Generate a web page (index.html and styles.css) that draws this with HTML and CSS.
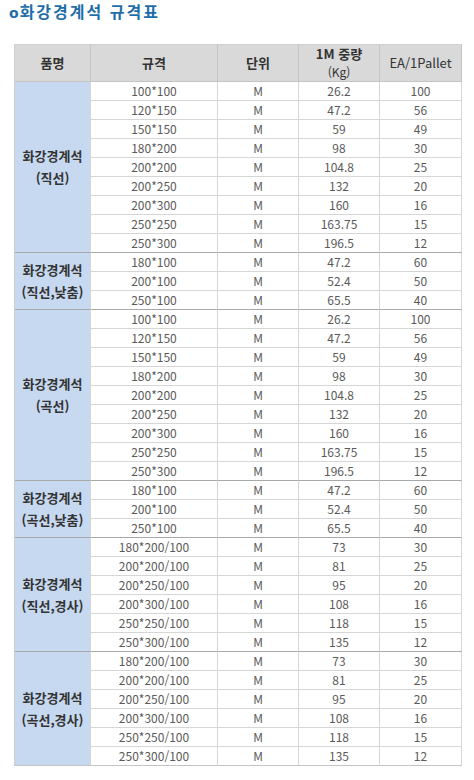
FILE: index.html
```html
<!DOCTYPE html>
<html lang="ko">
<head>
<meta charset="utf-8">
<link rel="stylesheet" href="styles.css">
</head>
<body>
<h1 class="title"><span class="bullet">o</span>화강경계석 규격표</h1>
<table class="spec">
  <colgroup>
    <col class="c1"><col class="c2"><col class="c3"><col class="c4"><col class="c5">
  </colgroup>
  <thead>
    <tr>
      <th class="b">품명</th>
      <th class="b">규격</th>
      <th class="b">단위</th>
      <th class="two"><span class="b">1M 중량</span><br><span class="kg">(Kg)</span></th>
      <th>EA/1Pallet</th>
    </tr>
  </thead>
  <tbody>
    <tr><td class="name" rowspan="9">화강경계석<br>(직선)</td><td>100*100</td><td>M</td><td>26.2</td><td>100</td></tr>
    <tr><td>120*150</td><td>M</td><td>47.2</td><td>56</td></tr>
    <tr><td>150*150</td><td>M</td><td>59</td><td>49</td></tr>
    <tr><td>180*200</td><td>M</td><td>98</td><td>30</td></tr>
    <tr><td>200*200</td><td>M</td><td>104.8</td><td>25</td></tr>
    <tr><td>200*250</td><td>M</td><td>132</td><td>20</td></tr>
    <tr><td>200*300</td><td>M</td><td>160</td><td>16</td></tr>
    <tr><td>250*250</td><td>M</td><td>163.75</td><td>15</td></tr>
    <tr class="end"><td>250*300</td><td>M</td><td>196.5</td><td>12</td></tr>

    <tr><td class="name" rowspan="3">화강경계석<br>(직선,낮춤)</td><td>180*100</td><td>M</td><td>47.2</td><td>60</td></tr>
    <tr><td>200*100</td><td>M</td><td>52.4</td><td>50</td></tr>
    <tr class="end"><td>250*100</td><td>M</td><td>65.5</td><td>40</td></tr>

    <tr><td class="name" rowspan="9">화강경계석<br>(곡선)</td><td>100*100</td><td>M</td><td>26.2</td><td>100</td></tr>
    <tr><td>120*150</td><td>M</td><td>47.2</td><td>56</td></tr>
    <tr><td>150*150</td><td>M</td><td>59</td><td>49</td></tr>
    <tr><td>180*200</td><td>M</td><td>98</td><td>30</td></tr>
    <tr><td>200*200</td><td>M</td><td>104.8</td><td>25</td></tr>
    <tr><td>200*250</td><td>M</td><td>132</td><td>20</td></tr>
    <tr><td>200*300</td><td>M</td><td>160</td><td>16</td></tr>
    <tr><td>250*250</td><td>M</td><td>163.75</td><td>15</td></tr>
    <tr class="end"><td>250*300</td><td>M</td><td>196.5</td><td>12</td></tr>

    <tr><td class="name" rowspan="3">화강경계석<br>(곡선,낮춤)</td><td>180*100</td><td>M</td><td>47.2</td><td>60</td></tr>
    <tr><td>200*100</td><td>M</td><td>52.4</td><td>50</td></tr>
    <tr class="end"><td>250*100</td><td>M</td><td>65.5</td><td>40</td></tr>

    <tr><td class="name" rowspan="6">화강경계석<br>(직선,경사)</td><td>180*200/100</td><td>M</td><td>73</td><td>30</td></tr>
    <tr><td>200*200/100</td><td>M</td><td>81</td><td>25</td></tr>
    <tr><td>200*250/100</td><td>M</td><td>95</td><td>20</td></tr>
    <tr><td>200*300/100</td><td>M</td><td>108</td><td>16</td></tr>
    <tr><td>250*250/100</td><td>M</td><td>118</td><td>15</td></tr>
    <tr class="end"><td>250*300/100</td><td>M</td><td>135</td><td>12</td></tr>

    <tr><td class="name last" rowspan="6">화강경계석<br>(곡선,경사)</td><td>180*200/100</td><td>M</td><td>73</td><td>30</td></tr>
    <tr><td>200*200/100</td><td>M</td><td>81</td><td>25</td></tr>
    <tr><td>200*250/100</td><td>M</td><td>95</td><td>20</td></tr>
    <tr><td>200*300/100</td><td>M</td><td>108</td><td>16</td></tr>
    <tr><td>250*250/100</td><td>M</td><td>118</td><td>15</td></tr>
    <tr class="final"><td>250*300/100</td><td>M</td><td>135</td><td>12</td></tr>
  </tbody>
</table>
</body>
</html>
```
FILE: styles.css
```css
html, body {
  margin: 0;
  padding: 0;
  background: #ffffff;
}

body {
  font-family: "Noto Sans CJK KR", "Noto Sans", sans-serif;
  color: #5a5a5a;
}

.title {
  margin: 0;
  padding: 1px 0 0 9px;
  height: 44px;
  box-sizing: border-box;
  font-size: 16px;
  line-height: 20px;
  font-weight: bold;
  color: #1f6ea8;
  letter-spacing: 2px;
}

.bullet {
  font-family: "DejaVu Sans", sans-serif;
  font-weight: bold;
  font-size: 14px;
  letter-spacing: 1px;
}

.spec {
  margin-left: 14px;
  border-collapse: separate;
  border-spacing: 0;
  table-layout: fixed;
  width: 448px;
  border-top: 1px solid #cfcfcf;
  border-left: 1px solid #cfcfcf;
  font-size: 12px;
}

.c1 { width: 76px; }
.c2 { width: 127px; }
.c3 { width: 81px; }
.c4 { width: 81px; }
.c5 { width: 82px; }

.spec th {
  background: #d9d9d9;
  color: #333333;
  font-weight: normal;
  font-size: 13px;
  height: 36px;
  padding: 0;
  line-height: 18px;
  text-align: center;
  vertical-align: middle;
  border-right: 1px solid #c4c4c4;
  border-bottom: 1px solid #c4c4c4;
}

.spec th.two {
  font-size: 12px;
}

.spec th.two .b {
  font-size: 13px;
}

.spec th.b, .spec th .b {
  font-weight: bold;
}

.spec td {
  height: 18px;
  padding: 0;
  line-height: 18px;
  text-align: center;
  vertical-align: middle;
  border-right: 1px solid #d6d6d6;
  border-bottom: 1px solid #d6d6d6;
  white-space: nowrap;
}

.spec tr.end td,
.spec td.name {
  border-bottom: 1px solid #a8a8a8;
}

.spec td.name {
  background: #c6d9f1;
  color: #333333;
  font-weight: bold;
  font-size: 13px;
  line-height: 22px;
  white-space: normal;
}

.spec td.name.last,
.spec tr.final td {
  border-bottom: 1px solid #c4c4c4;
}
```
